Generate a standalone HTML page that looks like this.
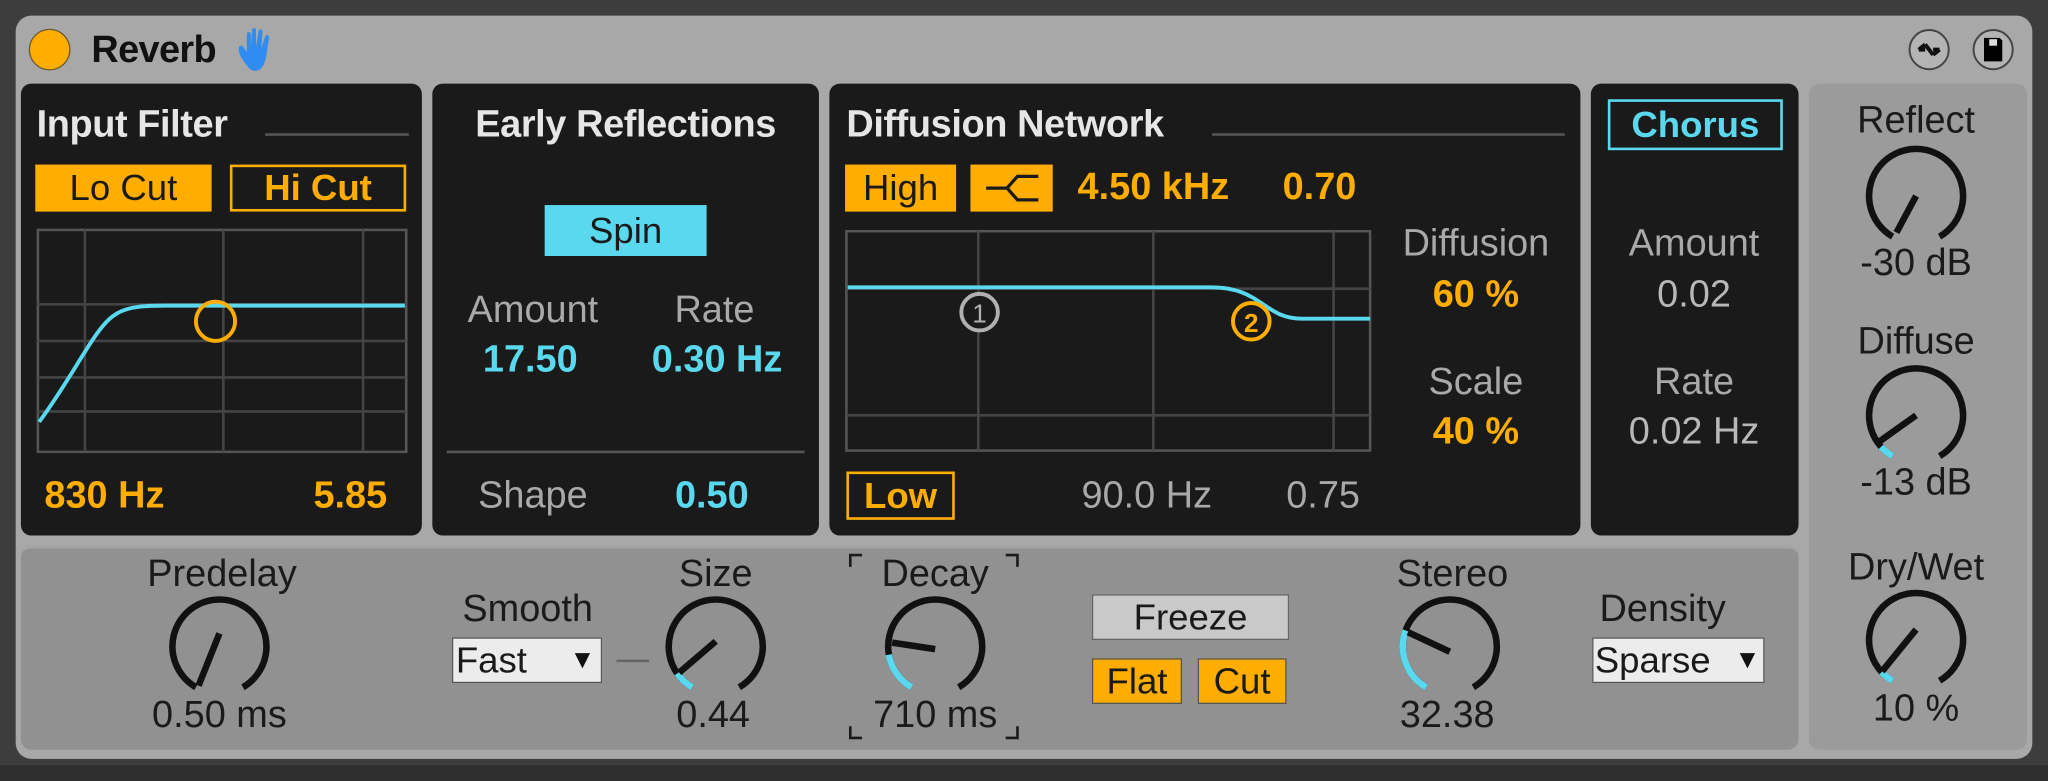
<!DOCTYPE html>
<html><head><meta charset="utf-8"><style>
html,body{margin:0;padding:0;background:#3d3d3d;width:2048px;height:781px;overflow:hidden}
#w{position:absolute;left:0;top:0;width:1568px;height:598px;transform:scale(1.30612);transform-origin:0 0;font-family:"Liberation Sans",sans-serif}
.a{position:absolute}
.c{position:absolute;transform:translate(-50%,-50%);white-space:nowrap}
.l{position:absolute;transform:translateY(-50%);white-space:nowrap}
.p{position:absolute;background:#1a1a1a;border-radius:8px}
.h{font-weight:bold;font-size:29px;color:#e6e6e6;letter-spacing:-0.3px}
.g{font-size:29px;color:#a9a9a9}
.o{font-size:29px;color:#ffad00;font-weight:bold}
.cy{font-size:29px;color:#5ad8ee;font-weight:bold}
.k{font-size:29px;color:#1a1a1a}
.btn{position:absolute;box-sizing:border-box;display:flex;align-items:center;justify-content:center;font-size:28px}
</style></head><body><div id="w">
<div class="a" style="left:0;top:586px;width:1568px;height:12px;background:#2f2f2f"></div>
<div class="a" style="left:12px;top:12px;width:1544px;height:569px;background:#a8a8a8;border-radius:12px"></div>
<!-- title bar -->
<div class="a" style="left:22px;top:22px;width:32px;height:32px;border-radius:50%;background:#ffad00;border:1px solid #6a5a30;box-sizing:border-box"></div>
<div class="l" style="left:70px;top:39px;font-size:29px;font-weight:bold;color:#111;letter-spacing:-0.5px">Reverb</div>
<svg class="a" style="left:180px;top:20px" width="34" height="36" viewBox="0 0 34 36"><path d="M9 30 C4 24 2 19 3 16 C4 14 6 15 7 17 L9 20 L9 6 C9 4 12 4 12 6 L12 16 L13 3 C13 1 16 1 16 3 L16 16 L18 4 C18 2 21 2 21 4 L20 17 L23 8 C24 6 26 7 26 9 L24 22 C23 28 21 33 17 34 C13 35 11 33 9 30Z" fill="#2f8cf0"/></svg>
<svg class="a" style="left:1460px;top:21px" width="84" height="34" viewBox="0 0 84 34">
<circle cx="17" cy="17" r="15" fill="#b4b4b4" stroke="#444" stroke-width="1.5"/><path d="M9 17 L14 13 M9 17 L14 17 M25 17 L20 21 M25 17 L20 17 M14 13 L20 21" stroke="#111" stroke-width="3" fill="none"/>
<circle cx="66" cy="17" r="15" fill="#b4b4b4" stroke="#444" stroke-width="1.5"/><path d="M59 8 H71 L73 10 V26 H59Z" fill="#000"/><rect x="63" y="9" width="6" height="5" fill="#ddd"/></svg>
<!-- Input Filter -->
<div class="p" style="left:16px;top:64px;width:307px;height:346px"></div>
<div class="l h" style="left:28px;top:96px">Input Filter</div>
<div class="a" style="left:203px;top:102px;width:110px;height:2px;background:#555"></div>
<div class="btn" style="left:27px;top:126px;width:135px;height:36px;background:#ffad00;color:#1a1a1a">Lo Cut</div>
<div class="btn" style="left:176px;top:126px;width:135px;height:36px;border:2px solid #ffad00;color:#ffad00;font-weight:bold">Hi Cut</div>
<svg class="a" style="left:28px;top:175px" width="284" height="172" viewBox="0 0 284 172">
<rect x="1" y="1" width="282" height="170" fill="none" stroke="#555" stroke-width="2"/>
<path d="M37 1V171M143 1V171M250 1V171M1 58H283M1 86H283M1 114H283M1 140H283" stroke="#444" stroke-width="2"/>
<path d="M2 148 C30 110 45 75 60 66 C70 59 85 59 100 59 L282 59" fill="none" stroke="#5ad8ee" stroke-width="3"/>
<circle cx="137" cy="71" r="15" fill="none" stroke="#ffad00" stroke-width="3"/></svg>
<div class="l o" style="left:34px;top:380px">830 Hz</div>
<div class="l o" style="left:240px;top:380px">5.85</div>
<!-- Early Reflections -->
<div class="p" style="left:331px;top:64px;width:296px;height:346px"></div>
<div class="c h" style="left:479px;top:96px">Early Reflections</div>
<div class="btn" style="left:417px;top:157px;width:124px;height:39px;background:#5ad8ee;color:#1a1a1a">Spin</div>
<div class="c g" style="left:408px;top:238px">Amount</div>
<div class="c g" style="left:547px;top:238px">Rate</div>
<div class="c cy" style="left:406px;top:276px">17.50</div>
<div class="c cy" style="left:549px;top:276px">0.30 Hz</div>
<div class="a" style="left:342px;top:345px;width:274px;height:2px;background:#555"></div>
<div class="c g" style="left:408px;top:380px">Shape</div>
<div class="c cy" style="left:545px;top:380px">0.50</div>
<!-- Diffusion Network -->
<div class="p" style="left:635px;top:64px;width:575px;height:346px"></div>
<div class="l h" style="left:648px;top:96px">Diffusion Network</div>
<div class="a" style="left:928px;top:102px;width:270px;height:2px;background:#555"></div>
<div class="btn" style="left:647px;top:126px;width:85px;height:36px;background:#ffad00;color:#1a1a1a">High</div>
<div class="btn" style="left:743px;top:126px;width:63px;height:36px;background:#ffad00"><svg width="44" height="24" viewBox="0 0 44 24"><path d="M2 12H18L26 3H42M18 12L26 21H42" fill="none" stroke="#1a1a1a" stroke-width="2.5"/></svg></div>
<div class="l o" style="left:825px;top:144px">4.50 kHz</div>
<div class="l o" style="left:982px;top:144px">0.70</div>
<svg class="a" style="left:647px;top:176px" width="403" height="170" viewBox="0 0 403 170">
<rect x="1" y="1" width="401" height="168" fill="none" stroke="#555" stroke-width="2"/>
<path d="M102 1V169M236 1V169M374 1V169M1 45H402M1 142H402" stroke="#444" stroke-width="2"/>
<path d="M2 44 L280 44 C320 44 320 68 350 68 L402 68" fill="none" stroke="#5ad8ee" stroke-width="3"/>
<circle cx="103" cy="63" r="14" fill="#1a1a1a" stroke="#b0b0b0" stroke-width="3"/><text x="103" y="71" font-size="20" fill="#b0b0b0" text-anchor="middle" font-family="Liberation Sans">1</text>
<circle cx="311" cy="70" r="14" fill="#1a1a1a" stroke="#ffad00" stroke-width="3"/><text x="311" y="78" font-size="20" fill="#ffad00" font-weight="bold" text-anchor="middle" font-family="Liberation Sans">2</text></svg>
<div class="btn" style="left:648px;top:361px;width:83px;height:37px;border:2px solid #ffad00;color:#ffad00;font-weight:bold">Low</div>
<div class="c g" style="left:878px;top:380px">90.0 Hz</div>
<div class="c g" style="left:1013px;top:380px">0.75</div>
<div class="c g" style="left:1130px;top:187px">Diffusion</div>
<div class="c o" style="left:1130px;top:226px">60 %</div>
<div class="c g" style="left:1130px;top:293px">Scale</div>
<div class="c o" style="left:1130px;top:331px">40 %</div>
<!-- Chorus -->
<div class="p" style="left:1218px;top:64px;width:159px;height:346px"></div>
<div class="btn" style="left:1231px;top:76px;width:134px;height:39px;border:2px solid #5ad8ee;color:#5ad8ee;font-weight:bold">Chorus</div>
<div class="c g" style="left:1297px;top:187px">Amount</div>
<div class="c g" style="left:1297px;top:226px;color:#b8b8b8">0.02</div>
<div class="c g" style="left:1297px;top:293px">Rate</div>
<div class="c g" style="left:1297px;top:331px;color:#b8b8b8">0.02 Hz</div>
<!-- right panel -->
<div class="a" style="left:1385px;top:64px;width:167px;height:510px;background:#9b9b9b;border-radius:8px"></div>
<div class="c k" style="left:1467px;top:93px">Reflect</div>
<div class="c k" style="left:1467px;top:202px">-30 dB</div>
<div class="c k" style="left:1467px;top:262px">Diffuse</div>
<div class="c k" style="left:1467px;top:370px">-13 dB</div>
<div class="c k" style="left:1467px;top:435px">Dry/Wet</div>
<div class="c k" style="left:1467px;top:543px">10 %</div>
<!-- bottom -->
<div class="a" style="left:16px;top:418px;width:1361px;height:156px;background:#919191;border-radius:8px;border-top:2px solid #a3a3a3;box-sizing:border-box"></div>
<div class="c k" style="left:170px;top:440px">Predelay</div>
<div class="c k" style="left:168px;top:548px">0.50 ms</div>
<div class="c k" style="left:404px;top:467px">Smooth</div>
<div class="a" style="left:346px;top:488px;width:115px;height:35px;background:#ececec;border:1px solid #555;box-sizing:border-box"></div>
<div class="l k" style="left:349px;top:506px;font-size:28px">Fast</div>
<div class="l" style="left:436px;top:506px;font-size:20px;color:#111">▼</div>
<div class="a" style="left:472px;top:505px;width:25px;height:2px;background:#666"></div>
<div class="c k" style="left:548px;top:440px">Size</div>
<div class="c k" style="left:546px;top:548px">0.44</div>
<div class="c k" style="left:716px;top:440px">Decay</div>
<div class="c k" style="left:716px;top:548px">710 ms</div>
<svg class="a" style="left:648px;top:422px" width="134" height="146" viewBox="0 0 134 146"><path d="M3 12V3H12M122 3H131V12M3 134V143H12M122 143H131V134" fill="none" stroke="#1a1a1a" stroke-width="2"/></svg>
<div class="btn" style="left:836px;top:455px;width:151px;height:35px;background:#c9c9c9;border:1px solid #666;color:#1a1a1a">Freeze</div>
<div class="btn" style="left:836px;top:504px;width:69px;height:35px;background:#ffad00;border:1px solid #555;color:#1a1a1a">Flat</div>
<div class="btn" style="left:917px;top:504px;width:68px;height:35px;background:#ffad00;border:1px solid #555;color:#1a1a1a">Cut</div>
<div class="c k" style="left:1112px;top:440px">Stereo</div>
<div class="c k" style="left:1108px;top:548px">32.38</div>
<div class="c k" style="left:1273px;top:467px">Density</div>
<div class="a" style="left:1219px;top:488px;width:132px;height:35px;background:#ececec;border:1px solid #555;box-sizing:border-box"></div>
<div class="l k" style="left:1221px;top:506px;font-size:28px">Sparse</div>
<div class="l" style="left:1328px;top:506px;font-size:20px;color:#111">▼</div>
<!-- knobs -->
<svg class="a" style="left:0;top:0" width="1568" height="598" viewBox="0 0 1568 598" fill="none" stroke-width="5">
<g transform="translate(1467,150)"><path d="M-18 31.18A36 36 0 1 1 18 31.18" stroke="#111"/><path d="M0 0L-15 28" stroke="#111"/></g>
<g transform="translate(1467,318)"><path d="M-18 31.18A36 36 0 1 1 18 31.18" stroke="#111"/><path d="M-18 31.18A36 36 0 0 1 -26.8 24.1" stroke="#5ad8ee"/><path d="M0 0L-28 20" stroke="#111"/></g>
<g transform="translate(1467,490)"><path d="M-18 31.18A36 36 0 1 1 18 31.18" stroke="#111"/><path d="M-18 31.18A36 36 0 0 1 -26.3 24.6" stroke="#5ad8ee"/><path d="M0 -8L-26 24" stroke="#111"/></g>
<g transform="translate(168,495)"><path d="M-18 31.18A36 36 0 1 1 18 31.18" stroke="#111"/><path d="M0 -10L-16 30" stroke="#111"/></g>
<g transform="translate(548,495)"><path d="M-18 31.18A36 36 0 1 1 18 31.18" stroke="#111"/><path d="M-18 31.18A36 36 0 0 1 -29.5 20.6" stroke="#5ad8ee"/><path d="M0 -4L-28 20" stroke="#111"/></g>
<g transform="translate(716,495)"><path d="M-18 31.18A36 36 0 1 1 18 31.18" stroke="#111"/><path d="M-18 31.18A36 36 0 0 1 -35.5 6.25" stroke="#5ad8ee"/><path d="M0 2L-33 -3" stroke="#111"/></g>
<g transform="translate(1110,495)"><path d="M-18 31.18A36 36 0 1 1 18 31.18" stroke="#111"/><path d="M-18 31.18A36 36 0 0 1 -33.8 -12.3" stroke="#5ad8ee"/><path d="M0 4L-32 -11" stroke="#111"/></g>
</svg>
</div></body></html>
